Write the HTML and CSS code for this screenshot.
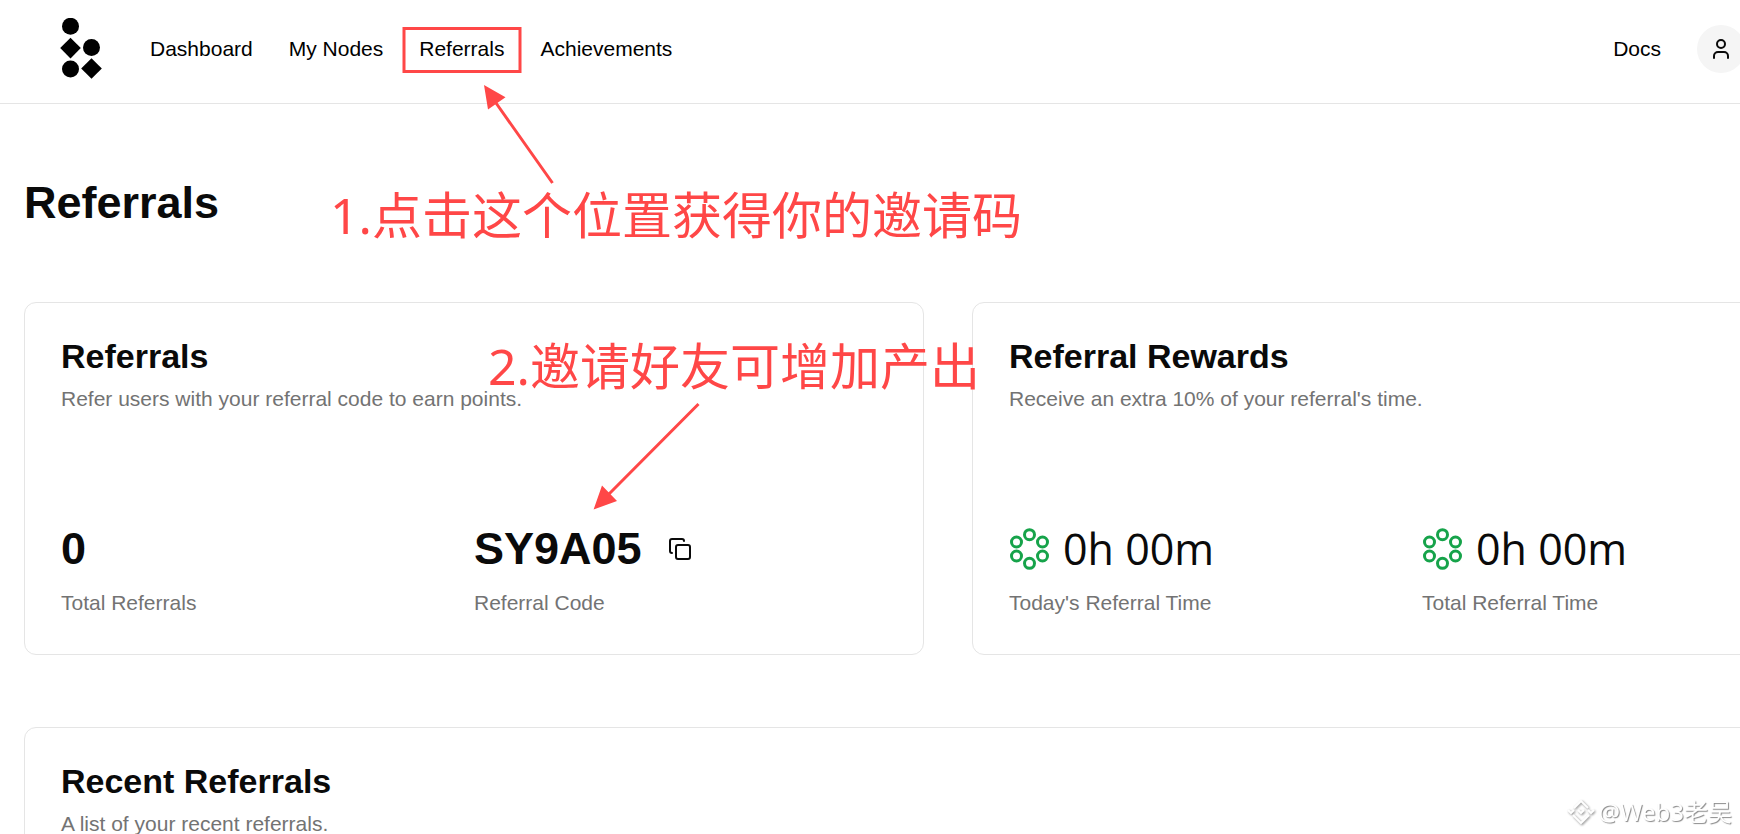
FILE: index.html
```html
<!DOCTYPE html>
<html lang="en">
<head>
    <meta charset="UTF-8">
    <meta name="viewport" content="width=device-width, initial-scale=1.0">
    <title>Referrals</title>
    <link rel="stylesheet" href="styles.css">
</head>
<body>

    <header class="topbar">
        <a href="#" class="logo" aria-label="Home">
            <svg width="42" height="62" viewBox="0 0 42 62">
                <circle cx="10.5" cy="8.3" r="8.5"/>
                <path d="M10.5 19.8l10.3 10.3-10.3 10.3L.2 30.1z"/>
                <circle cx="31.5" cy="29.5" r="8.5"/>
                <circle cx="10.5" cy="51" r="8.5"/>
                <path d="M31.5 40.2l10.3 10.3-10.3 10.3-10.3-10.3z"/>
            </svg>
        </a>
        <nav class="nav">
            <a href="#">Dashboard</a>
            <a href="#">My Nodes</a>
            <a href="#">Referrals</a>
            <a href="#">Achievements</a>
        </nav>
        <div class="account">
            <a href="#">Docs</a>
            <button type="button" class="avatar" aria-label="Account">
                <svg class="line-icon" viewBox="0 0 24 24">
                    <circle cx="12" cy="7" r="4"/>
                    <path d="M19 21v-2a4 4 0 0 0-4-4H9a4 4 0 0 0-4 4v2"/>
                </svg>
            </button>
        </div>
    </header>

    <main class="content">
        <h1>Referrals</h1>

        <div class="cards">
            <section class="card">
                <h2>Referrals</h2>
                <p class="muted">Refer users with your referral code to earn points.</p>
                <div class="stats">
                    <div>
                        <div class="value">0</div>
                        <p class="muted">Total Referrals</p>
                    </div>
                    <div>
                        <div class="value">
                            SY9A05
                            <button type="button" class="copy" aria-label="Copy code">
                                <svg class="line-icon" viewBox="0 0 24 24">
                                    <rect x="8" y="8" width="14" height="14" rx="2"/>
                                    <path d="M4 16c-1.1 0-2-.9-2-2V4c0-1.1.9-2 2-2h10c1.1 0 2 .9 2 2"/>
                                </svg>
                            </button>
                        </div>
                        <p class="muted">Referral Code</p>
                    </div>
                </div>
            </section>

            <section class="card">
                <h2>Referral Rewards</h2>
                <p class="muted">Receive an extra 10% of your referral's time.</p>
                <div class="stats">
                    <div>
                        <div class="value time">
                            <svg class="ring" width="42" height="42" viewBox="0 0 42 42">
                                <circle cx="20.5" cy="6.7" r="5"/>
                                <circle cx="33.5" cy="14" r="5"/>
                                <circle cx="33.5" cy="28" r="5"/>
                                <circle cx="20.5" cy="35.3" r="5"/>
                                <circle cx="7.5" cy="28" r="5"/>
                                <circle cx="7.5" cy="14" r="5"/>
                            </svg>
                            0h 00m
                        </div>
                        <p class="muted">Today's Referral Time</p>
                    </div>
                    <div>
                        <div class="value time">
                            <svg class="ring" width="42" height="42" viewBox="0 0 42 42">
                                <circle cx="20.5" cy="6.7" r="5"/>
                                <circle cx="33.5" cy="14" r="5"/>
                                <circle cx="33.5" cy="28" r="5"/>
                                <circle cx="20.5" cy="35.3" r="5"/>
                                <circle cx="7.5" cy="28" r="5"/>
                                <circle cx="7.5" cy="14" r="5"/>
                            </svg>
                            0h 00m
                        </div>
                        <p class="muted">Total Referral Time</p>
                    </div>
                </div>
            </section>

            <section class="card wide">
                <h2>Recent Referrals</h2>
                <p class="muted">A list of your recent referrals.</p>
            </section>
        </div>
    </main>

    <!-- tutorial notes drawn over the page -->
    <svg class="marks" width="1000" height="520" viewBox="0 0 1000 520">
        <rect x="404" y="28.5" width="116" height="43"/>
        <path d="M552.5 183L496 103M698.5 404L608 495"/>
        <path class="head" d="M484 85l21.5 12.2L488 109.5zM593.6 509.5L602 485.5l15 15.5z"/>
    </svg>
    <p class="note note-one" lang="zh">1.点击这个位置获得你的邀请码</p>
    <p class="note note-two" lang="zh">2.邀请好友可增加产出</p>

    <div class="watermark" lang="zh">
        <svg width="28" height="25" viewBox="0 0 28 25">
            <path d="M7 8l7-7 7 7M1 10l3 3 3-3M21 10l3 3 3-3M11 10l3 3 3-3M6 15l8 8 8-8"/>
        </svg>
        @Web3老吴
    </div>

</body>
</html>
```
FILE: styles.css
```css
* {
    box-sizing: border-box;
}

body {
    position: relative;
    min-height: 100vh;
    margin: 0;
    font-family: "Liberation Sans", Arial, sans-serif;
    font-size: 21px;
    line-height: 30px;
    color: #0a0a0a;
    background: #fff;
    overflow: hidden;
}

h1, h2, p {
    margin: 0;
}

a {
    color: #000;
    text-decoration: none;
}

button {
    padding: 0;
    border: none;
    background: none;
    color: inherit;
    cursor: pointer;
}

.line-icon {
    display: block;
    width: 24px;
    height: 24px;
    fill: none;
    stroke: currentColor;
    stroke-width: 2;
    stroke-linecap: round;
    stroke-linejoin: round;
}

/* top bar */

.topbar {
    display: flex;
    align-items: center;
    height: 104px;
    padding: 0 0 6px 60px;
    border-bottom: 1px solid #e5e5e5;
}

.logo svg {
    display: block;
}

.nav {
    display: flex;
    gap: 36px;
    margin-left: 48px;
}

.account {
    display: flex;
    align-items: center;
    gap: 36px;
    margin-left: auto;
    margin-right: -5px;
}

.avatar {
    display: flex;
    align-items: center;
    justify-content: center;
    width: 48px;
    height: 48px;
    border-radius: 50%;
    background: #f5f5f5;
}

/* content */

.content {
    padding: 72px 24px;
}

h1 {
    margin-bottom: 72px;
    font-size: 45px;
    line-height: 54px;
}

/* the cards run past the right edge of the window */
.cards {
    display: grid;
    grid-template-columns: 1fr 1fr;
    gap: 72px 48px;
    margin-right: -156px;
}

.card {
    padding: 36px;
    border: 1px solid #e5e5e5;
    border-radius: 12px;
}

.wide {
    grid-column: 1 / -1;
}

h2 {
    margin-bottom: 10px;
    font-size: 34px;
    line-height: 35px;
}

.muted {
    color: #737373;
}

.stats {
    display: grid;
    grid-template-columns: 1fr 1fr;
    margin-top: 108px;
}

.value {
    display: flex;
    align-items: center;
    margin-bottom: 12px;
    font-size: 45px;
    font-weight: bold;
    line-height: 54px;
}

.copy {
    margin-left: 26px;
}

.time {
    gap: 12px;
    font-family: "Open Sans", "Noto Sans", sans-serif;
    font-size: 43px;
    font-weight: normal;
}

.ring {
    fill: none;
    stroke: #16a34a;
    stroke-width: 3;
}

/* notes */

.marks {
    position: absolute;
    top: 0;
    left: 0;
    fill: none;
    stroke: #ff4747;
    stroke-width: 3;
    pointer-events: none;
}

.head {
    fill: #ff4747;
    stroke: none;
}

.note {
    position: absolute;
    font-family: "Noto Sans", "Noto Sans CJK SC", sans-serif;
    font-size: 50px;
    line-height: 60px;
    color: #ff4747;
    white-space: nowrap;
}

.note-one {
    top: 185px;
    left: 330px;
}

.note-two {
    top: 336px;
    left: 488px;
}

.watermark {
    position: fixed;
    right: 8px;
    bottom: 7px;
    display: flex;
    align-items: center;
    gap: 4px;
    font-family: "Noto Sans", "Noto Sans CJK SC", sans-serif;
    font-size: 24px;
    color: #fff;
    text-shadow: 1px 1px 1px #888;
}

.watermark svg {
    fill: none;
    stroke: #fff;
    stroke-width: 2;
    filter: drop-shadow(1px 1px 1px #888);
}
```
